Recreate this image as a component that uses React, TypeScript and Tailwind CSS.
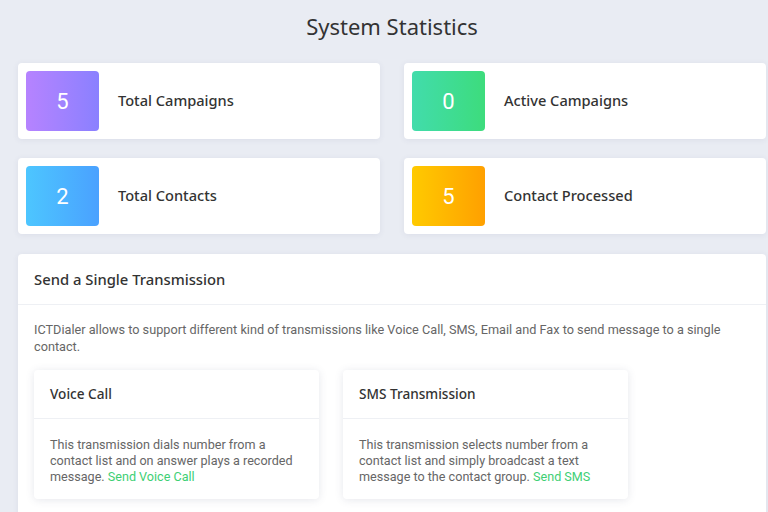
import React from "react";

const head = { fontFamily: '"Noto Sans", "Liberation Sans", sans-serif' };
const body = { fontFamily: 'Roboto, "Liberation Sans", sans-serif' };

function Stat({ n, label, grad }: { n: string; label: string; grad: string }) {
  return (
    <div className="bg-white rounded-[4px] shadow-[0_1px_6px_rgba(60,70,110,0.08)] h-[76px] flex items-center px-[8px]">
      <div className={`w-[73px] h-[60px] rounded-[4px] flex items-center justify-center text-white text-[22px] ${grad}`} style={body}>
        {n}
      </div>
      <div className="ml-[19px] text-[14.6px] font-medium text-[#333]" style={head}>
        {label}
      </div>
    </div>
  );
}

function SubCard({ title, text, link }: { title: string; text: string; link: string }) {
  return (
    <div className="w-[285px] bg-white rounded-[4px] shadow-[0_1px_8px_rgba(60,70,110,0.13)]">
      <div className="h-[49px] flex items-center px-[16px] border-b border-[#eef0f4] text-[13.6px] font-medium text-[#333]" style={head}>
        {title}
      </div>
      <div className="px-[16px] pt-[18px] pb-[14px] text-[12.6px] leading-[16px] text-[#666]" style={body}>
        {text} <span className="text-[#3ecf74]">{link}</span>
      </div>
    </div>
  );
}

export default function App() {
  return (
    <div className="w-[768px] h-[512px] overflow-hidden bg-[#e9ecf3] pl-[18px] pr-[2px]">
      <div className="h-[63px] flex items-center justify-center text-[22px] text-[#333] pb-[10px]" style={head}>
        System Statistics
      </div>
      <div className="grid grid-cols-2 gap-x-[24px] gap-y-[19px]">
        <Stat n="5" label="Total Campaigns" grad="bg-gradient-to-r from-[#b683ff] to-[#8a80ff]" />
        <Stat n="0" label="Active Campaigns" grad="bg-gradient-to-r from-[#42dcab] to-[#3ddc7c]" />
        <Stat n="2" label="Total Contacts" grad="bg-gradient-to-r from-[#4dc6ff] to-[#4aa1ff]" />
        <Stat n="5" label="Contact Processed" grad="bg-gradient-to-r from-[#ffca00] to-[#ffa000]" />
      </div>
      <div className="mt-[20px] bg-white rounded-[4px] shadow-[0_1px_6px_rgba(60,70,110,0.08)] h-[300px]">
        <div className="h-[51px] flex items-center px-[16px] border-b border-[#eef0f4] text-[14.8px] font-medium text-[#333]" style={head}>
          Send a Single Transmission
        </div>
        <div className="px-[16px] pt-[16px]">
          <p className="text-[12.7px] leading-[17px] text-[#666]" style={body}>
            ICTDialer allows to support different kind of transmissions like Voice Call, SMS, Email and Fax to send message to a single contact.
          </p>
          <div className="flex gap-[24px] mt-[15px]">
            <SubCard
              title="Voice Call"
              text="This transmission dials number from a contact list and on answer plays a recorded message."
              link="Send Voice Call"
            />
            <SubCard
              title="SMS Transmission"
              text="This transmission selects number from a contact list and simply broadcast a text message to the contact group."
              link="Send SMS"
            />
          </div>
        </div>
      </div>
    </div>
  );
}
